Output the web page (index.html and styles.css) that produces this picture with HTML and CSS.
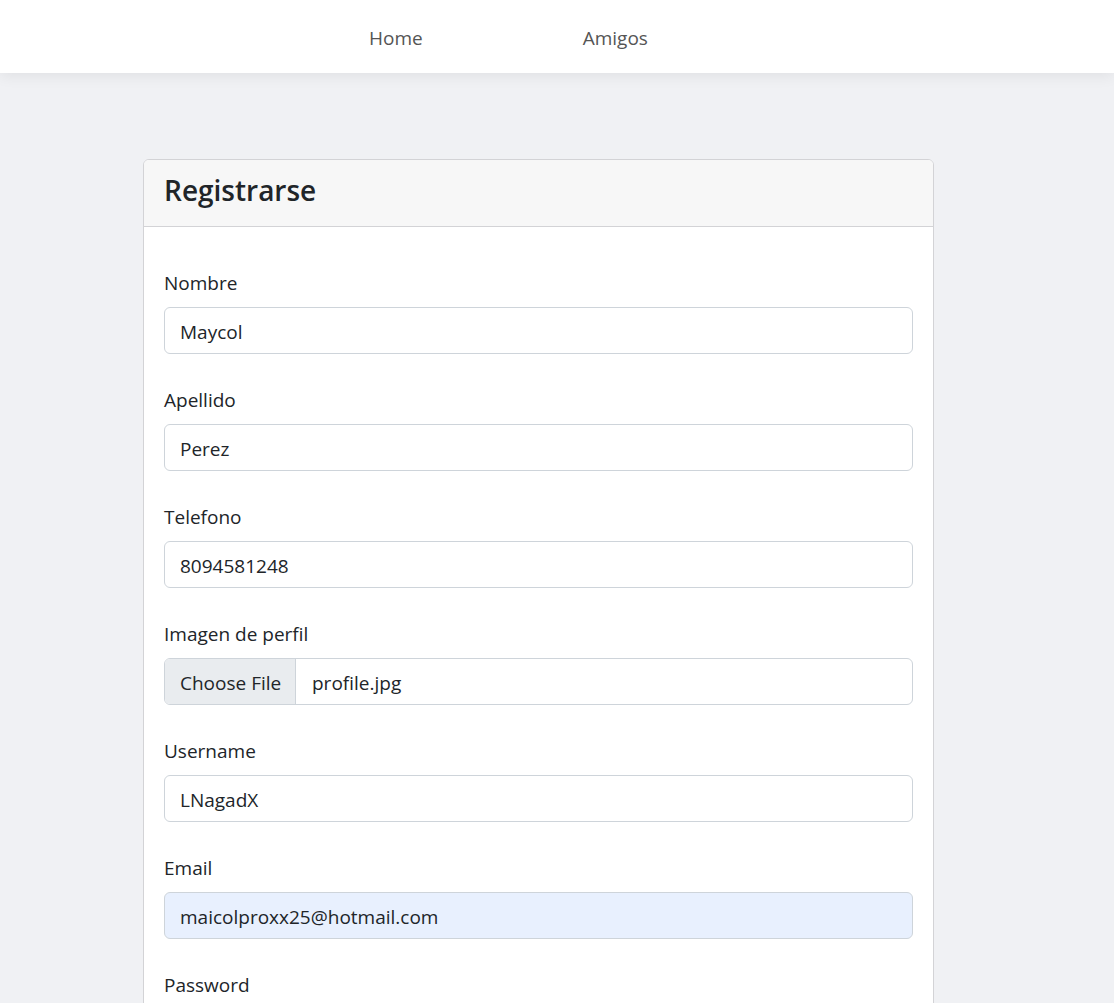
FILE: index.html
```html
<!DOCTYPE html>
<html lang="es">
<head>
<meta charset="utf-8">
<title>Registrarse</title>
<link rel="stylesheet" href="styles.css">
</head>
<body>
<nav class="navbar">
  <a class="nav-link" href="#">Home</a>
  <a class="nav-link" href="#">Amigos</a>
</nav>
<main class="page">
  <section class="card">
    <header class="card-header">
      <h4 class="card-title">Registrarse</h4>
    </header>
    <form class="card-body">
      <div class="group">
        <label class="label">Nombre</label>
        <div class="control">Maycol</div>
      </div>
      <div class="group">
        <label class="label">Apellido</label>
        <div class="control">Perez</div>
      </div>
      <div class="group">
        <label class="label">Telefono</label>
        <div class="control">8094581248</div>
      </div>
      <div class="group">
        <label class="label">Imagen de perfil</label>
        <div class="control file">
          <span class="file-btn">Choose File</span>
          <span class="file-name">profile.jpg</span>
        </div>
      </div>
      <div class="group">
        <label class="label">Username</label>
        <div class="control">LNagadX</div>
      </div>
      <div class="group">
        <label class="label">Email</label>
        <div class="control autofill">maicolproxx25@hotmail.com</div>
      </div>
      <div class="group">
        <label class="label">Password</label>
        <div class="control"></div>
      </div>
    </form>
  </section>
</main>
</body>
</html>
```
FILE: styles.css
```css
* { box-sizing: border-box; }
html, body { margin: 0; padding: 0; }
body {
  background: #f0f1f4;
  font-family: "Open Sans", "Noto Sans", "Liberation Sans", sans-serif;
  font-size: 19px;
  line-height: 30px;
  color: #212529;
  height: 1003px;
  overflow: hidden;
}
.navbar {
  height: 73px;
  background: #fff;
  display: flex;
  align-items: center;
  padding: 3px 0 0 369px;
  gap: 160px;
  box-shadow: 0 3px 14px rgba(0,0,0,0.07);
  position: relative;
  z-index: 1;
}
.nav-link {
  color: #555;
  text-decoration: none;
  font-size: 19px;
}
.page {
  padding: 86px 0 0 143px;
}
.card {
  width: 791px;
  background: #fff;
  border: 1px solid #d3d3d6;
  border-radius: 6px;
  overflow: hidden;
}
.card-header {
  background: #f7f7f7;
  border-bottom: 1px solid #d3d3d6;
  padding: 10px 20px;
}
.card-title {
  margin: 0 0 10px;
  padding-top: 2px;
  height: 36px;
  font-size: 28px;
  line-height: 36px;
  font-weight: 600;
  color: #212529;
}
.card-body {
  padding: 40px 20px 20px;
  display: flex;
  flex-direction: column;
  gap: 30px;
}
.label {
  display: block;
  height: 30px;
  padding-top: 1px;
  margin-bottom: 10px;
}
.control {
  height: 47px;
  border: 1px solid #ced4da;
  border-radius: 6px;
  padding: 9px 15px 5px;
  background: #fff;
  color: #212529;
  white-space: nowrap;
}
.autofill { background: #e8f0fe; }
.control.file {
  display: flex;
  padding: 0;
  overflow: hidden;
}
.file-btn {
  background: #e9ecef;
  border-right: 1px solid #ced4da;
  padding: 9px 15px 5px;
  width: 131px;
  white-space: nowrap;
}
.file-name {
  padding: 9px 16px 5px;
}
```
